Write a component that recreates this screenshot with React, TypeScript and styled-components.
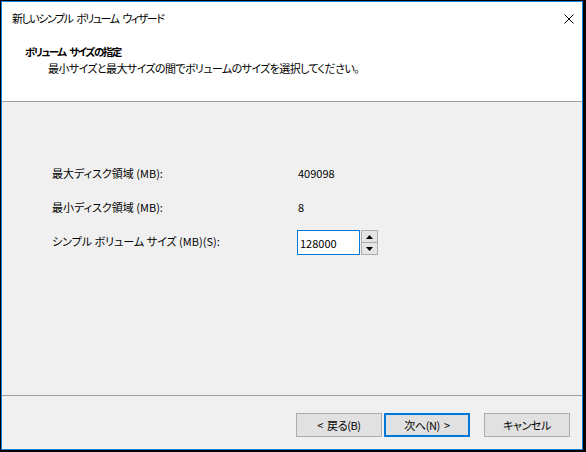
import React from 'react';
import styled, { createGlobalStyle } from 'styled-components';

const GlobalStyle = createGlobalStyle`
  * {
    box-sizing: border-box;
  }
  body {
    margin: 0;
    background: #000;
    font-family: "Noto Sans CJK JP", "Noto Sans", sans-serif;
    font-size: 11px;
    color: #000;
    font-feature-settings: "palt";
  }
`;

const CloseIcon = () => (
  <svg width="10" height="10" viewBox="0 0 10 10">
    <path d="M0.5 0.5 L9.5 9.5 M9.5 0.5 L0.5 9.5" stroke="#000" strokeWidth="1" fill="none" />
  </svg>
);

const Arrow = ({ down }: { down?: boolean }) => (
  <svg width="7" height="4" viewBox="0 0 7 4">
    <path d={down ? 'M0 0 L7 0 L3.5 4 Z' : 'M0 4 L7 4 L3.5 0 Z'} fill="#000" />
  </svg>
);

const App = () => {
  return (
    <>
      <GlobalStyle />
      <Window>
        <TitleBar>
          <TitleText>新しいシンプル ボリューム ウィザード</TitleText>
          <CloseButton>
            <CloseIcon />
          </CloseButton>
        </TitleBar>
        <Header>
          <HeaderTitle>ボリューム サイズの指定</HeaderTitle>
          <HeaderSub>最小サイズと最大サイズの間でボリュームのサイズを選択してください。</HeaderSub>
        </Header>
        <Body>
          <Row>
            <Label>最大ディスク領域 (MB):</Label>
            <Value>409098</Value>
          </Row>
          <Row>
            <Label>最小ディスク領域 (MB):</Label>
            <Value>8</Value>
          </Row>
          <Row $tall>
            <Label $lift>シンプル ボリューム サイズ (MB)(S):</Label>
            <Spinner>
              <NumberInput>128000</NumberInput>
              <SpinButtons>
                <SpinButton>
                  <Arrow />
                </SpinButton>
                <SpinButton>
                  <Arrow down />
                </SpinButton>
              </SpinButtons>
            </Spinner>
          </Row>
        </Body>
        <Footer>
          <Button>&lt; 戻る(B)</Button>
          <Button $primary>次へ(N) &gt;</Button>
          <Button $gap>キャンセル</Button>
        </Footer>
      </Window>
    </>
  );
};

export default App;

const Window = styled.div`
  margin: 1px 0 0 1px;
  width: 582px;
  height: 449px;
  border: 1px solid #1883d7;
  background-color: #f0f0f0;
  display: flex;
  flex-direction: column;
`;

const TitleBar = styled.div`
  height: 32px;
  background-color: #fff;
  display: flex;
  align-items: center;
  justify-content: space-between;
  padding: 0 7px 0 10px;
`;

const TitleText = styled.div`
  line-height: 16px;
  letter-spacing: -1.5px;
  word-spacing: 3px;
`;

const CloseButton = styled.div`
  width: 10px;
  height: 10px;
  display: flex;
  margin-right: 1px;
  margin-top: 1px;
`;

const Header = styled.div`
  height: 68px;
  background-color: #fff;
  border-bottom: 1px solid #a0a0a0;
  padding: 9px 0 0 23px;
`;

const HeaderTitle = styled.div`
  font-size: 10.5px;
  font-weight: bold;
  line-height: 17px;
  letter-spacing: -1.5px;
  word-spacing: 3px;
`;

const HeaderSub = styled.div`
  line-height: 16px;
  padding-left: 23px;
  letter-spacing: -0.6px;
`;

const Body = styled.div`
  flex: 1;
  display: flex;
  flex-direction: column;
  gap: 13px;
  padding: 60px 0 0 50px;
  border-bottom: 1px solid #a0a0a0;
`;

const Row = styled.div<{ $tall?: boolean }>`
  height: ${(p) => (p.$tall ? '25px' : '21px')};
  display: flex;
  align-items: center;
`;

const Label = styled.div<{ $lift?: boolean }>`
  width: 245px;
  line-height: 16px;
  margin-bottom: ${(p) => (p.$lift ? '3px' : '0')};
`;

const Value = styled.div`
  padding-left: 1px;
  line-height: 16px;
`;

const Spinner = styled.div`
  display: flex;
  gap: 1px;
  height: 25px;
`;

const NumberInput = styled.div`
  width: 63px;
  height: 25px;
  border: 1px solid #0078d7;
  background-color: #fff;
  padding-left: 2px;
  display: flex;
  align-items: center;
`;

const SpinButtons = styled.div`
  width: 17px;
  display: flex;
  flex-direction: column;
`;

const SpinButton = styled.div`
  flex: 1;
  border: 1px solid #adadad;
  background-color: #e5e5e5;
  display: flex;
  align-items: center;
  justify-content: center;

  & + & {
    border-top: none;
  }
`;

const Footer = styled.div`
  height: 53px;
  display: flex;
  justify-content: flex-end;
  align-items: flex-start;
  padding: 17px 12px 0 0;
  gap: 2px;
`;

const Button = styled.div<{ $primary?: boolean; $gap?: boolean }>`
  width: 86px;
  height: 24px;
  background-color: #e1e1e1;
  border: ${(p) => (p.$primary ? '2px solid #0078d7' : '1px solid #adadad')};
  margin-left: ${(p) => (p.$gap ? '12px' : '0')};
  display: flex;
  align-items: center;
  justify-content: center;
  line-height: 16px;
  letter-spacing: -0.4px;
  word-spacing: 2px;
`;
